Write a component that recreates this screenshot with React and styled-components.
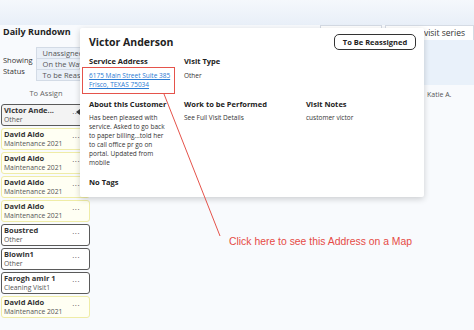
import React from 'react'
import styled, { createGlobalStyle } from 'styled-components'

const GlobalStyle = createGlobalStyle`
  html, body { margin: 0; padding: 0; }
  body {
    background: #f8fafd;
    font-family: "Open Sans", "Noto Sans", sans-serif;
    color: #222;
  }
`

const Page = styled.div`
  position: relative;
  width: 474px;
  height: 330px;
  overflow: hidden;
  background: #f8fafd;
`

const TopBanner = styled.div`
  height: 25px;
  background: linear-gradient(180deg, #f5f8fc 0%, #e8eff8 100%);
`

const Main = styled.div`
  display: flex;
`

const Sidebar = styled.div`
  width: 92px;
  flex-shrink: 0;
  display: flex;
  flex-direction: column;
`

const Title = styled.div`
  padding-left: 3px;
  height: 14px;
  line-height: 14px;
  font-size: 9px;
  font-weight: 700;
  white-space: nowrap;
  color: #1e1e1e;
`

const StatusFilter = styled.div`
  display: flex;
  margin-top: 8px;
  gap: 3px;
`

const StatusLabel = styled.div`
  width: 34px;
  padding: 8px 0 0 3px;
  font-size: 7.5px;
  line-height: 11px;
  color: #333;
`

const StatusOptions = styled.div`
  flex: 1;
  display: flex;
  flex-direction: column;
  border: 1px solid #d3dbe6;
  border-right: none;
`

const StatusOption = styled.div`
  height: 10px;
  line-height: 10px;
  padding-left: 6px;
  font-size: 7.5px;
  color: #555;
  white-space: nowrap;
  background: #eaf0f8;
  border-bottom: 1px solid #d3dbe6;
  &:last-child { border-bottom: none; }
`

const ColumnLabel = styled.div`
  margin-top: 6px;
  height: 12px;
  line-height: 12px;
  font-size: 7.5px;
  color: #666;
  text-align: center;
`

const CardList = styled.div`
  margin-top: 5px;
  padding-left: 1px;
  display: flex;
  flex-direction: column;
  gap: 2px;
`

const VisitCard = styled.div`
  box-sizing: border-box;
  width: 89px;
  height: 22px;
  display: flex;
  justify-content: space-between;
  align-items: flex-start;
  padding: 0 9px 0 2px;
  border-radius: 3px;
  border: ${p => (p.$assigned ? '1.5px solid #5a5a5a' : '1px solid #efeca6')};
  background: ${p => (p.$active ? '#f3f3f3' : p.$assigned ? '#fff' : '#fffff3')};
`

const CardText = styled.div`
  display: flex;
  flex-direction: column;
  white-space: nowrap;
`

const CardName = styled.div`
  font-size: 7.5px;
  font-weight: 700;
  line-height: 10.2px;
  color: #333;
`

const CardType = styled.div`
  font-size: 6.8px;
  line-height: 9.3px;
  color: #555;
`

const CardMenu = styled.div`
  font-size: 8px;
  line-height: 11px;
  letter-spacing: 0.5px;
  color: #555;
`

const Board = styled.div`
  flex: 1;
  display: flex;
  flex-direction: column;
`

const Toolbar = styled.div`
  height: 15px;
  display: flex;
  justify-content: flex-end;
  gap: 3px;
`

const ToolButton = styled.div`
  box-sizing: border-box;
  width: ${p => p.$width}px;
  padding-right: 8px;
  border: 1px solid #d5dbe4;
  border-bottom: none;
  background: #fff;
  font-size: 8.5px;
  line-height: 14px;
  color: #333;
  text-align: right;
  white-space: nowrap;
  overflow: hidden;
`

const BoardHeader = styled.div`
  height: 45px;
  background: #e9f1fa;
`

const NamesRow = styled.div`
  height: 20px;
  display: flex;
  justify-content: flex-end;
`

const TechName = styled.div`
  width: 47px;
  font-size: 7px;
  line-height: 20px;
  color: #555;
`

const Popup = styled.div`
  position: absolute;
  left: 80px;
  top: 28px;
  width: 344px;
  height: 169px;
  box-sizing: border-box;
  padding: 6px 8px 0 9px;
  background: #fff;
  border-radius: 2px;
  box-shadow: 0 2px 6px rgba(0, 0, 0, 0.18);
`

const Pointer = styled.div`
  position: absolute;
  left: -4px;
  top: 81px;
  width: 0;
  height: 0;
  border-top: 3px solid transparent;
  border-bottom: 3px solid transparent;
  border-right: 4px solid #333;
`

const PopupHeader = styled.div`
  display: flex;
  justify-content: space-between;
  align-items: center;
  height: 16px;
`

const CustomerName = styled.div`
  font-size: 10.5px;
  font-weight: 700;
  color: #222;
`

const OutlineButton = styled.div`
  box-sizing: border-box;
  width: 82px;
  height: 16px;
  border: 1px solid #333;
  border-radius: 5px;
  font-size: 7.5px;
  font-weight: 700;
  line-height: 14px;
  text-align: center;
  color: #222;
`

const DetailGrid = styled.div`
  display: grid;
  grid-template-columns: 95px 122px 1fr;
  row-gap: 10.5px;
  margin-top: 6px;
`

const Section = styled.div`
  display: flex;
  flex-direction: column;
`

const SectionTitle = styled.div`
  font-size: 7.5px;
  font-weight: 700;
  line-height: 10px;
  color: #222;
  white-space: nowrap;
`

const SectionBody = styled.div`
  margin-top: ${p => (p.$tight ? 3.5 : 4.5)}px;
  font-size: 6.5px;
  line-height: 9px;
  color: #333;
  white-space: nowrap;
`

const AddressLink = styled.a`
  margin-top: 4.5px;
  font-size: 6.5px;
  line-height: 9px;
  color: #2b7bd3;
  text-decoration: underline;
  white-space: nowrap;
`

const AddressHighlight = styled.div`
  position: absolute;
  left: 82px;
  top: 67px;
  width: 93px;
  height: 27px;
  box-sizing: border-box;
  border: 1.5px solid #e5534b;
`

const CalloutLine = styled.svg`
  position: absolute;
  left: 0;
  top: 0;
  pointer-events: none;
`

const CalloutLabel = styled.div`
  position: absolute;
  left: 229px;
  top: 235px;
  font-family: "Liberation Sans", Arial, sans-serif;
  font-size: 10.4px;
  line-height: 13px;
  color: #e64a45;
  white-space: nowrap;
`

const cards = [
  { name: 'Victor Ande...', type: 'Other', assigned: true, active: true },
  { name: 'David Aldo', type: 'Maintenance 2021' },
  { name: 'David Aldo', type: 'Maintenance 2021' },
  { name: 'David Aldo', type: 'Maintenance 2021' },
  { name: 'David Aldo', type: 'Maintenance 2021' },
  { name: 'Boustred', type: 'Other', assigned: true },
  { name: 'Blowin1', type: 'Other', assigned: true },
  { name: 'Farogh amir 1', type: 'Cleaning Visit1', assigned: true },
  { name: 'David Aldo', type: 'Maintenance 2021' },
]

const aboutLines = [
  'Has been pleased with',
  'service. Asked to go back',
  'to paper billing...told her',
  'to call office pr go on',
  'portal. Updated from',
  'mobile',
]

const Lines = ({ lines }) =>
  lines.map((l, i) => (
    <React.Fragment key={i}>
      {l}
      {i < lines.length - 1 && <br />}
    </React.Fragment>
  ))

export default function App() {
  return (
    <Page>
      <GlobalStyle />
      <TopBanner />
      <Main>
        <Sidebar>
          <Title>Daily Rundown</Title>
          <StatusFilter>
            <StatusLabel>Showing<br />Status</StatusLabel>
            <StatusOptions>
              <StatusOption>Unassigned</StatusOption>
              <StatusOption>On the Way</StatusOption>
              <StatusOption>To be Reassigned</StatusOption>
            </StatusOptions>
          </StatusFilter>
          <ColumnLabel>To Assign</ColumnLabel>
          <CardList>
            {cards.map((c, i) => (
              <VisitCard key={i} $assigned={c.assigned} $active={c.active}>
                <CardText>
                  <CardName>{c.name}</CardName>
                  <CardType>{c.type}</CardType>
                </CardText>
                <CardMenu>...</CardMenu>
              </VisitCard>
            ))}
          </CardList>
        </Sidebar>
        <Board>
          <Toolbar>
            <ToolButton $width={62}>Collapse</ToolButton>
            <ToolButton $width={89}>Show visit series</ToolButton>
          </Toolbar>
          <BoardHeader />
          <NamesRow>
            <TechName>Katie A.</TechName>
          </NamesRow>
        </Board>
      </Main>

      <Popup>
        <Pointer />
        <PopupHeader>
          <CustomerName>Victor Anderson</CustomerName>
          <OutlineButton>To Be Reassigned</OutlineButton>
        </PopupHeader>
        <DetailGrid>
          <Section>
            <SectionTitle>Service Address</SectionTitle>
            <AddressLink href="#">
              <Lines lines={['6175 Main Street Suite 385', 'Frisco, TEXAS 75034']} />
            </AddressLink>
          </Section>
          <Section>
            <SectionTitle>Visit Type</SectionTitle>
            <SectionBody>Other</SectionBody>
          </Section>
          <Section />
          <Section>
            <SectionTitle>About this Customer</SectionTitle>
            <SectionBody $tight>
              <Lines lines={aboutLines} />
            </SectionBody>
          </Section>
          <Section>
            <SectionTitle>Work to be Performed</SectionTitle>
            <SectionBody $tight>See Full Visit Details</SectionBody>
          </Section>
          <Section>
            <SectionTitle>Visit Notes</SectionTitle>
            <SectionBody $tight>customer victor</SectionBody>
          </Section>
          <Section>
            <SectionTitle>No Tags</SectionTitle>
          </Section>
        </DetailGrid>
      </Popup>

      <AddressHighlight />
      <CalloutLine width="474" height="330">
        <line x1="164" y1="94" x2="220" y2="236" stroke="#e5534b" strokeWidth="1" />
      </CalloutLine>
      <CalloutLabel>Click here to see this Address on a Map</CalloutLabel>
    </Page>
  )
}
